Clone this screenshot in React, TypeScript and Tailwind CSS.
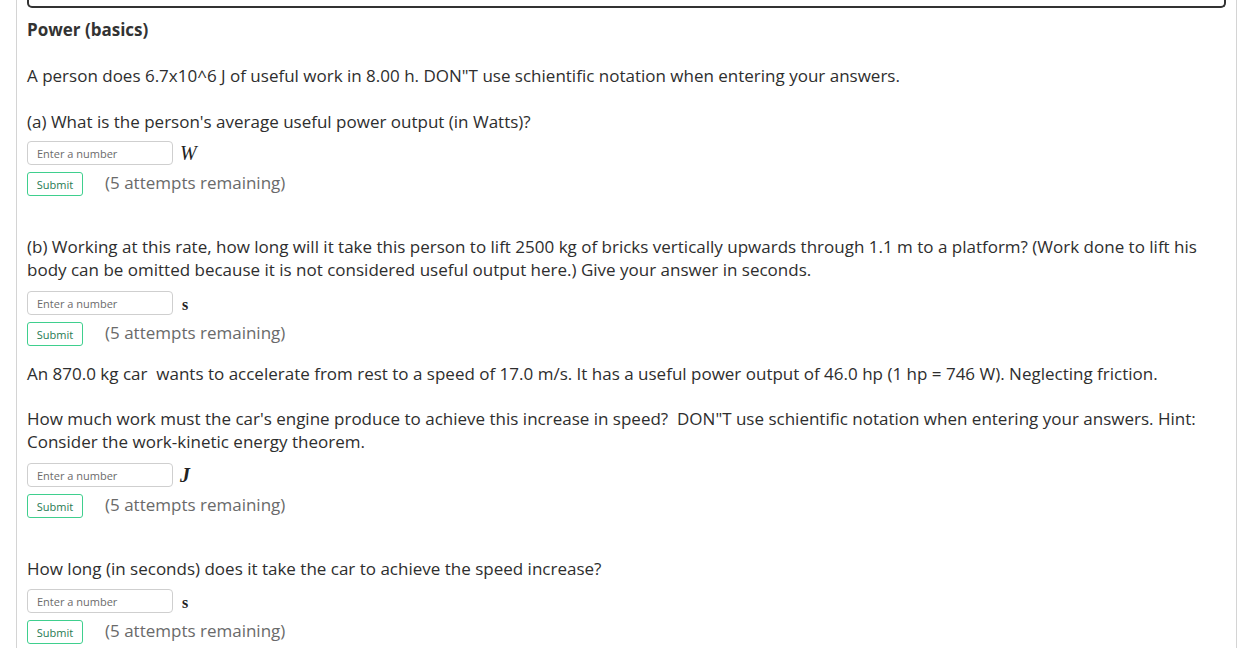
import type { ReactNode } from "react";

function Answer({ unit, gap = "mt-[10px]" }: { unit: ReactNode; gap?: string }) {
  return (
    <div className={gap}>
      <div className="flex items-center h-[24px]">
        <div className="w-[146px] h-[24px] border border-[#cfcfcf] rounded-[4px] flex items-center pl-[9px] text-[11px] text-[#6b6b6b]">
          Enter a number
        </div>
        <div className="ml-[7px]">{unit}</div>
      </div>
      <div className="flex items-center mt-[7px]">
        <div className="w-[56px] h-[24px] border border-[#3fcf8e] rounded-[3px] flex items-center justify-center text-[11px] text-[#1f7a52]">
          Submit
        </div>
        <span className="ml-[22px] text-[17px] text-[#6a6a6a] leading-[23px] -mt-[3px]">
          (5 attempts remaining)
        </span>
      </div>
    </div>
  );
}

function Unit({ children, italic, bold }: { children: ReactNode; italic?: boolean; bold?: boolean }) {
  return (
    <span
      className={`font-['Liberation_Serif',serif] ${italic ? "italic text-[20px]" : "text-[16px] ml-[2px]"} ${bold ? "font-bold" : ""} text-[#222] leading-none`}
    >
      {children}
    </span>
  );
}

export default function App() {
  return (
    <div className="min-h-[648px] bg-white font-['Open_Sans',sans-serif] text-[17px] leading-[23px] text-[#2e2e2e]">
      <div className="ml-[16px] w-[1221px] min-h-[648px] border-x border-[#d4d4d4] px-[10px] overflow-hidden">
        <div className="-mt-[20px] h-[28px] border-x-2 border-b-2 border-[#333] rounded-b-[5px]" />

        <h2 className="mt-[10px] font-bold text-[#333]">Power (basics)</h2>

        <p className="mt-[23px]">
          A person does 6.7x10^6 J of useful work in 8.00 h. DON"T use schientific notation when entering your answers.
        </p>

        <p className="mt-[23px]">(a) What is the person's average useful power output (in Watts)?</p>
        <Answer unit={<Unit italic>W</Unit>} gap="mt-[8px]" />

        <p className="mt-[39px]">
          (b) Working at this rate, how long will it take this person to lift 2500 kg of bricks vertically upwards through 1.1 m to a platform? (Work done to lift his body can be omitted because it is not considered useful output here.) Give your answer in seconds.
        </p>
        <Answer unit={<Unit bold>s</Unit>} />

        <p className="mt-[16px]">
          An 870.0 kg car&nbsp; wants to accelerate from rest to a speed of 17.0 m/s. It has a useful power output of 46.0 hp (1 hp = 746 W). Neglecting friction.
        </p>

        <p className="mt-[22px]">
          How much work must the car's engine produce to achieve this increase in speed?&nbsp; DON"T use schientific notation when entering your answers. Hint: Consider the work-kinetic energy theorem.
        </p>
        <Answer unit={<Unit italic bold>J</Unit>} />

        <p className="mt-[39px]">How long (in seconds) does it take the car to achieve the speed increase?</p>
        <Answer unit={<Unit bold>s</Unit>} gap="mt-[9px]" />
      </div>
    </div>
  );
}
